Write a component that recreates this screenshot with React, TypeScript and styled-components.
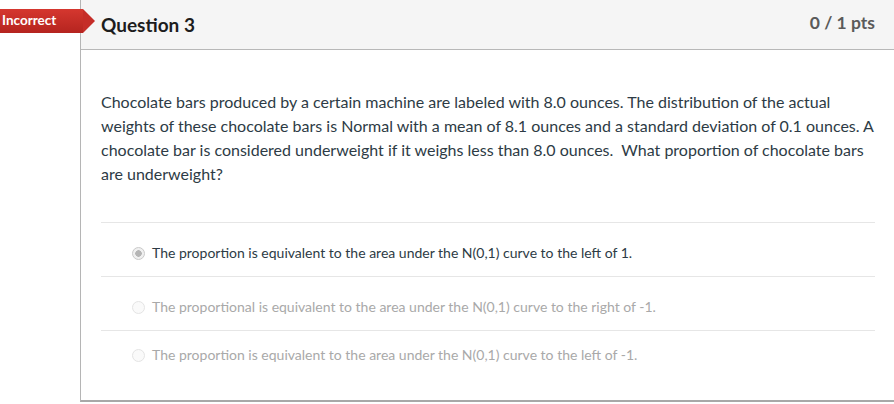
import React from 'react';
import styled, { createGlobalStyle } from 'styled-components';

const GlobalStyle = createGlobalStyle`
  body {
    margin: 0;
    background: #fff;
    font-family: Lato, "Open Sans", sans-serif;
  }
`;

const Page = styled.div`
  position: relative;
  display: flex;
  width: 894px;
  height: 404px;
  overflow: hidden;
`;

const Gutter = styled.div`
  width: 80px;
  flex-shrink: 0;
`;

const Badge = styled.div`
  position: absolute;
  top: 9px;
  left: 0;
  width: 83px;
  height: 24px;
  padding-left: 2px;
  box-sizing: border-box;
  background: linear-gradient(#d5372f, #b5241f);
  color: #fff;
  font-weight: 700;
  font-size: 13.5px;
  line-height: 22px;
  z-index: 2;
  &::after {
    content: '';
    position: absolute;
    left: 83px;
    top: 0;
    border-top: 12px solid transparent;
    border-bottom: 12px solid transparent;
    border-left: 12px solid #c52d28;
  }
`;

const Card = styled.div`
  flex: 1;
  border-left: 1px solid #b5b5b5;
  border-bottom: 2px solid #a8a8a8;
  height: 402px;
  box-sizing: border-box;
`;

const Header = styled.div`
  display: flex;
  align-items: center;
  justify-content: space-between;
  height: 49px;
  background: #f5f5f5;
  border-bottom: 1px solid #b8b8b8;
  padding: 0 20px;
`;

const Title = styled.h2`
  margin: 0;
  font-size: 19px;
  font-weight: 700;
  color: #1d1d1d;
`;

const Points = styled.span`
  font-size: 17.5px;
  font-weight: 700;
  color: #5a5a5a;
  padding-bottom: 4px;
`;

const Body = styled.div`
  padding: 40px 20px 0 20px;
  width: 774px;
`;

const QuestionText = styled.p`
  margin: 0 0 36px;
  font-size: 16px;
  line-height: 24px;
  color: #2d3b45;
`;

const Answers = styled.div`
  display: flex;
  flex-direction: column;
`;

const Answer = styled.div<{ $top: number }>`
  display: flex;
  align-items: center;
  gap: 7px;
  border-top: 1px solid #e6e6e6;
  padding: ${(p) => p.$top}px 0 15px 31px;
  font-size: 14px;
  line-height: 16px;
`;

const Radio = styled.span<{ $checked: boolean }>`
  width: 11px;
  height: 11px;
  border-radius: 50%;
  border: 1px solid ${(p) => (p.$checked ? '#c9c9c9' : '#e4e4e4')};
  background: ${(p) =>
    p.$checked
      ? 'radial-gradient(circle, #b5b5b5 0 3px, #f0f0f0 3.5px)'
      : '#fafafa'};
`;

const AnswerText = styled.span<{ $muted: boolean }>`
  color: ${(p) => (p.$muted ? '#a9a9a9' : '#2d3b45')};
`;

const answers = [
  {
    text: 'The proportion is equivalent to the area under the N(0,1) curve to the left of 1.',
    checked: true,
    top: 22,
  },
  {
    text: 'The proportional is equivalent to the area under the N(0,1) curve to the right of -1.',
    checked: false,
    top: 22,
  },
  {
    text: 'The proportion is equivalent to the area under the N(0,1) curve to the left of -1.',
    checked: false,
    top: 16,
  },
];

export default function App() {
  return (
    <>
      <GlobalStyle />
      <Page>
        <Badge>Incorrect</Badge>
        <Gutter />
        <Card>
          <Header>
            <Title>Question 3</Title>
            <Points>0 / 1 pts</Points>
          </Header>
          <Body>
            <QuestionText>
              Chocolate bars produced by a certain machine are labeled with 8.0 ounces. The
              distribution of the actual weights of these chocolate bars is Normal with a mean
              of 8.1 ounces and a standard deviation of 0.1 ounces. A chocolate bar is considered
              underweight if it weighs less than 8.0 ounces.&nbsp; What proportion of chocolate
              bars are underweight?
            </QuestionText>
            <Answers>
              {answers.map((a) => (
                <Answer key={a.text} $top={a.top}>
                  <Radio $checked={a.checked} />
                  <AnswerText $muted={!a.checked}>{a.text}</AnswerText>
                </Answer>
              ))}
            </Answers>
          </Body>
        </Card>
      </Page>
    </>
  );
}
